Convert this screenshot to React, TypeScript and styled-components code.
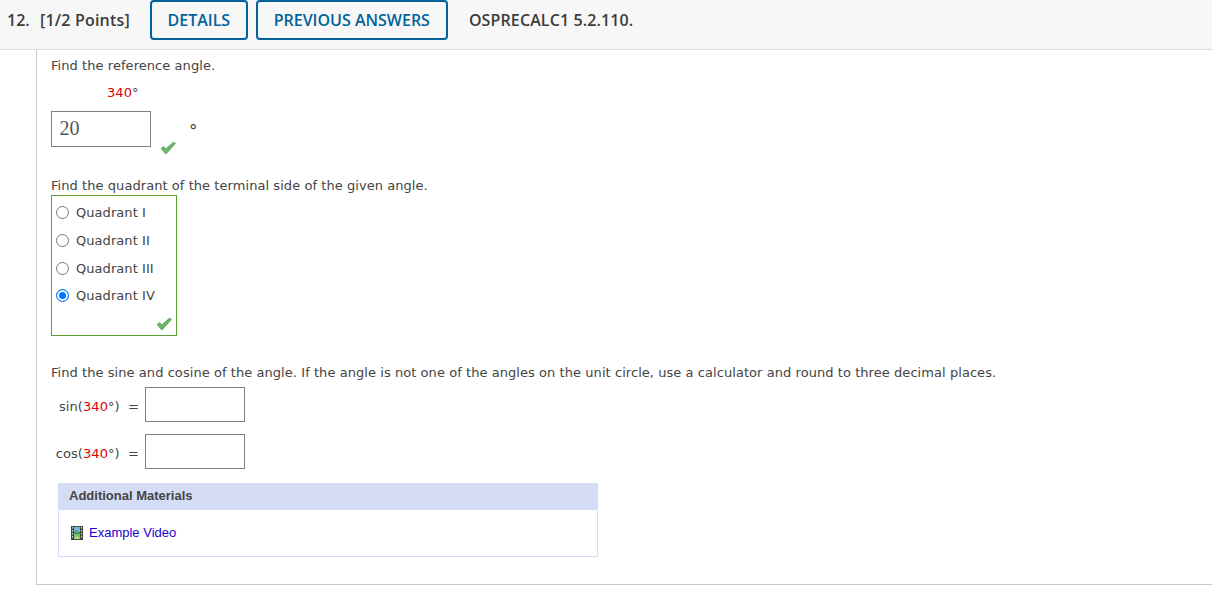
import { createGlobalStyle, styled } from "styled-components";

const GlobalStyle = createGlobalStyle`
  html, body {
    margin: 0;
    padding: 0;
    background: #fff;
  }
`;

const QUADRANTS = ["Quadrant I", "Quadrant II", "Quadrant III", "Quadrant IV"];

const Page = styled.div`
  width: 1212px;
  height: 594px;
  overflow: hidden;
`;

const Header = styled.header`
  height: 40px;
  display: flex;
  align-items: center;
  background: #f7f7f7;
  border-bottom: 1px solid #dcdcdc;
  padding: 0 0 9px 7px;
  font-family: "Open Sans", sans-serif;
  font-size: 16px;
  font-weight: 600;
  color: #3c3c3c;
`;

const Number = styled.span`
  width: 33px;
`;

const Points = styled.span`
  width: 110px;
  letter-spacing: 0.2px;
`;

const HeaderButton = styled.button<{ $pad: number }>`
  height: 40px;
  margin-right: 8px;
  padding: 0 ${(p) => p.$pad}px;
  box-sizing: border-box;
  background: #f7f7f7;
  border: 2px solid #00639c;
  border-radius: 4px;
  color: #00639c;
  font: inherit;
`;

const Code = styled.span`
  margin-left: 13px;
  letter-spacing: 0.12px;
`;

const Body = styled.main`
  margin-left: 36px;
  height: 535px;
  box-sizing: border-box;
  border-left: 1px solid #c8c8c8;
  border-bottom: 1px solid #c8c8c8;
  padding: 8px 0 0 14px;
  font-family: "DejaVu Sans", sans-serif;
  font-size: 13px;
  letter-spacing: 0.06px;
  color: #444;
`;

const Prompt = styled.div`
  line-height: 16px;
`;

const LongPrompt = styled(Prompt)`
  margin-bottom: 6px;
`;

const Angle = styled.div`
  margin: 11px 0 0 56px;
  line-height: 16px;
`;

const Red = styled.span`
  color: #e00000;
`;

const AnswerRow = styled.div`
  display: flex;
  height: 36px;
  margin: 10px 0 31px;
`;

const AnswerBox = styled.div`
  width: 100px;
  height: 36px;
  box-sizing: border-box;
  border: 1px solid #808080;
  padding-left: 7.5px;
  font-family: "Liberation Serif", serif;
  font-size: 20px;
  line-height: 32px;
  color: #555;
`;

const CheckSlot = styled.div`
  width: 34px;
  padding: 29px 0 0 9px;
  box-sizing: border-box;
`;

const Degree = styled.span`
  padding: 5px 0 0 4px;
  font-size: 17px;
  line-height: 31px;
`;

const Choices = styled.div`
  position: relative;
  width: 126px;
  height: 141px;
  margin: 1px 0 29px;
  box-sizing: border-box;
  border: 1px solid #5a9e2f;
  padding-top: 3px;
`;

const Choice = styled.label`
  height: 27.7px;
  display: flex;
  align-items: center;
  padding-left: 4px;
  gap: 7px;
`;

const Radio = styled.span<{ $on?: boolean }>`
  width: 13px;
  height: 13px;
  box-sizing: border-box;
  border-radius: 50%;
  border: 1px solid ${(p) => (p.$on ? "#0075ff" : "#767676")};
  background: ${(p) => (p.$on ? "#0075ff" : "#fff")};
  box-shadow: ${(p) => (p.$on ? "inset 0 0 0 2px #fff" : "none")};
`;

const ChoiceCheck = styled.div`
  position: absolute;
  right: 4px;
  bottom: 4px;
  line-height: 0;
`;

const TrigRow = styled.div`
  display: flex;
  align-items: center;
  margin-bottom: 12px;
`;

const TrigLabel = styled.div`
  width: 94px;
  padding: 4px 6px 0 0;
  box-sizing: border-box;
  text-align: right;
`;

const TrigInput = styled.div`
  width: 100px;
  height: 35px;
  box-sizing: border-box;
  border: 1px solid #808080;
`;

const Materials = styled.section`
  width: 540px;
  height: 74px;
  margin: 14px 0 0 7px;
  box-sizing: border-box;
  border: 1px solid #d5ddf6;
  font-family: "Liberation Sans", sans-serif;
  font-size: 13px;
  letter-spacing: 0;
`;

const MaterialsTitle = styled.div`
  height: 27px;
  margin: -1px -1px 0;
  padding-left: 11px;
  background: #d5ddf6;
  font-weight: bold;
  line-height: 26px;
  color: #444;
`;

const VideoRow = styled.div`
  display: flex;
  align-items: center;
  gap: 6px;
  padding: 15px 0 0 12px;
`;

const VideoLink = styled.a`
  color: #2200cc;
  text-decoration: none;
  line-height: 16px;
`;

function Check() {
  return (
    <svg width="16" height="15" viewBox="0 0 16 15">
      <path
        d="M1 8.5 L3.5 6.5 L6 8.8 L13.5 2 L15.5 3.5 L6 14 L5.5 13.8 Z"
        fill="#6db667"
        stroke="#4f8f4d"
        strokeWidth="0.6"
        strokeLinejoin="round"
      />
    </svg>
  );
}

function FilmIcon() {
  return (
    <svg width="12" height="14" viewBox="0 0 12 14">
      <rect width="12" height="14" fill="#3f4a3f" />
      <rect x="3" y="1" width="6" height="5.5" fill="#6fb6d8" />
      <path d="M3 6.5 L5 4 L9 6.5 Z" fill="#5aa55a" />
      <rect x="3" y="7.5" width="6" height="5.5" fill="#6fc07a" />
      <path d="M3 13 L6 10 L9 13 Z" fill="#e0d070" />
      {[1, 4, 7, 10].map((y) => (
        <g key={y} fill="#cfd6cf">
          <rect x="1" y={y} width="1" height="1.5" />
          <rect x="10" y={y} width="1" height="1.5" />
        </g>
      ))}
    </svg>
  );
}

export default function App() {
  return (
    <Page>
      <GlobalStyle />
      <Header>
        <Number>12.</Number>
        <Points>[1/2 Points]</Points>
        <HeaderButton $pad={15.5}>DETAILS</HeaderButton>
        <HeaderButton $pad={16}>PREVIOUS ANSWERS</HeaderButton>
        <Code>OSPRECALC1 5.2.110.</Code>
      </Header>
      <Body>
        <Prompt>Find the reference angle.</Prompt>
        <Angle>
          <Red>340</Red>°
        </Angle>
        <AnswerRow>
          <AnswerBox>20</AnswerBox>
          <CheckSlot>
            <Check />
          </CheckSlot>
          <Degree>°</Degree>
        </AnswerRow>
        <Prompt>Find the quadrant of the terminal side of the given angle.</Prompt>
        <Choices>
          {QUADRANTS.map((q, i) => (
            <Choice key={q}>
              <Radio $on={i === 3} />
              {q}
            </Choice>
          ))}
          <ChoiceCheck>
            <Check />
          </ChoiceCheck>
        </Choices>
        <LongPrompt>
          Find the sine and cosine of the angle. If the angle is not one of the angles on the unit
          circle, use a calculator and round to three decimal places.
        </LongPrompt>
        <TrigRow>
          <TrigLabel>
            sin(<Red>340</Red>°) &nbsp;=
          </TrigLabel>
          <TrigInput />
        </TrigRow>
        <TrigRow>
          <TrigLabel>
            cos(<Red>340</Red>°) &nbsp;=
          </TrigLabel>
          <TrigInput />
        </TrigRow>
        <Materials>
          <MaterialsTitle>Additional Materials</MaterialsTitle>
          <VideoRow>
            <FilmIcon />
            <VideoLink>Example Video</VideoLink>
          </VideoRow>
        </Materials>
      </Body>
    </Page>
  );
}
